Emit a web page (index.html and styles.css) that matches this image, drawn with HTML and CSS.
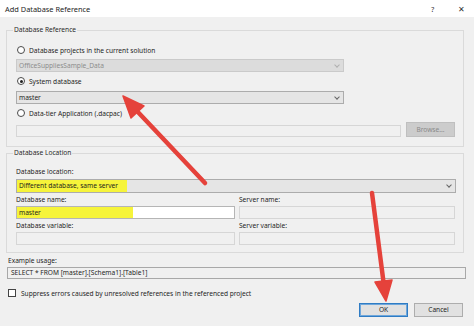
FILE: index.html
```html
<!DOCTYPE html>
<html lang="en">
<head>
  <meta charset="UTF-8" />
  <title>Add Database Reference</title>
  <link rel="stylesheet" href="styles.css">
</head>
<body>
  <div class="dialog">
    <div class="titlebar">
      <span class="title">Add Database Reference</span>
      <span class="help">?</span>
      <span class="close">✕</span>
    </div>
    <div class="content">
      <fieldset class="group ref">
        <legend>Database Reference</legend>
        <div class="radio-row first"><span class="radio"></span>Database projects in the current solution</div>
        <div class="combo disabled w328">OfficeSuppliesSample_Data<span class="chev"></span></div>
        <div class="radio-row"><span class="radio checked"></span>System database</div>
        <div class="combo w328 tall">master<span class="chev"></span></div>
        <div class="radio-row"><span class="radio"></span>Data-tier Application (.dacpac)</div>
        <div class="path-row">
          <div class="textbox disabled grow"></div>
          <div class="btn browse">Browse...</div>
        </div>
      </fieldset>

      <fieldset class="group loc">
        <legend>Database Location</legend>
        <div class="label first">Database location:</div>
        <div class="combo full big"><span class="hl">Different database, same server</span><span class="chev"></span></div>
        <div class="cols">
          <div class="col">
            <div class="label">Database name:</div>
            <div class="textbox white"><span class="hl">master</span></div>
            <div class="label">Database variable:</div>
            <div class="textbox disabled"></div>
          </div>
          <div class="col">
            <div class="label">Server name:</div>
            <div class="textbox disabled"></div>
            <div class="label">Server variable:</div>
            <div class="textbox disabled"></div>
          </div>
        </div>
      </fieldset>

      <div class="label usage">Example usage:</div>
      <div class="textbox example">SELECT * FROM [master].[Schema1].[Table1]</div>

      <div class="check-row"><span class="checkbox"></span>Suppress errors caused by unresolved references in the referenced project</div>

      <div class="buttons">
        <div class="btn ok">OK</div>
        <div class="btn">Cancel</div>
      </div>
    </div>

    <svg class="arrows" width="474" height="326" viewBox="0 0 474 326">
      <g fill="#e5423b" stroke="#e5423b" stroke-linecap="round" stroke-linejoin="round">
        <line x1="205" y1="183" x2="136" y2="110" stroke-width="4.5" />
        <polygon points="123,96 144,106 131,118" stroke-width="1.5" />
        <line x1="372" y1="193" x2="383.5" y2="282" stroke-width="4.5" />
        <polygon points="386,301 392,280 375,282" stroke-width="1.5" />
      </g>
    </svg>
  </div>
</body>
</html>
```

FILE: styles.css
```css
body {
  margin: 0;
  font-family: "Noto Sans", "Open Sans", sans-serif;
  font-size: 6.6px;
  color: #1e1e1e;
  background: #f0f0f0;
}
.dialog {
  position: relative;
  width: 474px;
  height: 326px;
  overflow: hidden;
  background: #f0f0f0;
}
.titlebar {
  height: 17px;
  background: #fff;
  display: flex;
  align-items: center;
  padding: 0 0 0 5px;
  font-size: 7.4px;
}
.title { flex: 1; }
.help { width: 27px; font-size: 7.5px; color: #333; }
.close { width: 16px; font-size: 8px; color: #333; }

.content {
  padding: 8px 10px 0 6px;
}
.group {
  margin: 0;
  border: 1px solid #dadada;
  padding: 0 8px 9px 9px;
  min-width: 0;
}
.group legend {
  margin-left: -3px;
  padding: 0 1px;
  height: 10px;
  line-height: 10px;
  color: #2a2a2a;
}
.loc { margin-top: 1px; padding-bottom: 7px; }

.radio-row {
  display: flex;
  align-items: center;
  height: 10px;
  margin-top: 4px;
  gap: 4px;
}
.radio-row.first { margin-top: 10px; }
.radio {
  width: 6px;
  height: 6px;
  border: 1px solid #4a4a4a;
  border-radius: 50%;
  background: #fff;
  margin-left: 1px;
  position: relative;
}
.radio.checked::after {
  content: "";
  position: absolute;
  left: 1.5px; top: 1.5px;
  width: 3px; height: 3px;
  border-radius: 50%;
  background: #222;
}

.combo {
  position: relative;
  box-sizing: border-box;
  height: 13px;
  line-height: 11px;
  margin-top: 4px;
  border: 1px solid #acacac;
  background: #e5e5e5;
  padding-left: 2px;
}
.combo.tall { margin-top: 5px; }
.combo.disabled {
  background: #dcdcdc;
  border-color: #cacaca;
  color: #8c8c8c;
}
.w328 { width: 328px; }
.combo.full { width: 440px; }
.combo.big {
  height: 14px;
  line-height: 12px;
  margin-top: 2px;
  padding-left: 0;
}
.chev {
  position: absolute;
  right: 4px;
  top: 3px;
  width: 3px;
  height: 3px;
  border-right: 1px solid #666;
  border-bottom: 1px solid #666;
  transform: rotate(45deg);
}
.combo.disabled .chev { border-color: #b0b0b0; }

.hl {
  display: inline-block;
  background: #f6f43a;
  padding: 0 2px;
  height: 100%;
}
.combo.big .hl { width: 106px; }

.path-row {
  display: flex;
  align-items: flex-end;
  gap: 5px;
  margin-top: 4px;
}
.textbox {
  box-sizing: border-box;
  height: 13px;
  border: 1px solid #d6d6d6;
  background: #f0f0f0;
}
.grow { flex: 1; height: 12px; }
.textbox.white {
  background: #fff;
  border-color: #b5b5b5;
}
.textbox.white .hl { width: 112px; line-height: 11px; }

.btn {
  box-sizing: border-box;
  width: 49px;
  height: 14px;
  line-height: 12px;
  text-align: center;
  border: 1px solid #adadad;
  background: #e1e1e1;
}
.browse {
  height: 15px;
  line-height: 13px;
  background: #cccccc;
  border-color: #bfbfbf;
  color: #8a8a8a;
}

.label {
  height: 10px;
  line-height: 10px;
  margin-top: 2px;
}
.label.first { margin-top: 9px; }
.cols {
  display: flex;
  gap: 4px;
}
.col { flex: 1; display: flex; flex-direction: column; }
.col .textbox { margin-top: 1px; }
.col:first-child { flex: 0 0 219px; }

.usage { margin-top: 3px; margin-left: 2px; }
.textbox.example {
  margin-top: 1px;
  margin-left: 1px;
  width: 459px;
  height: 12px;
  line-height: 10px;
  padding-left: 3px;
  border-color: #a8a8a8;
}

.check-row {
  display: flex;
  align-items: center;
  gap: 5px;
  height: 10px;
  margin-top: 9px;
  margin-left: 2px;
}
.checkbox {
  width: 6px;
  height: 6px;
  border: 1px solid #444;
  background: #fff;
}

.buttons {
  display: flex;
  justify-content: flex-end;
  gap: 6px;
  margin-top: 5px;
  margin-right: 1px;
}
.btn.ok {
  border: 1px solid #2f7cc4;
  box-shadow: inset 0 0 0 1px #6fa7db;
}

.arrows {
  position: absolute;
  left: 0;
  top: 0;
  pointer-events: none;
}
```
